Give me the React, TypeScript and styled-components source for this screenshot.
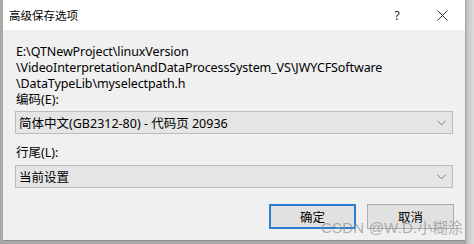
import styled, { createGlobalStyle } from "styled-components";

const GlobalStyle = createGlobalStyle`
  html, body {
    margin: 0;
    padding: 0;
    width: 474px;
    height: 244px;
    overflow: hidden;
    background: #b4b4b4;
  }
  * {
    box-sizing: border-box;
  }
`;

const font = `"Noto Sans", "Noto Sans CJK SC", sans-serif`;

const Screen = styled.div`
  width: 474px;
  height: 244px;
  display: flex;
  background: linear-gradient(to right, #a9a9a9 0, #a9a9a9 466px, #c4c4c4 467px, #dcdcdc 474px);
  padding-left: 3px;
  font-family: ${font};
  color: #000;
`;

const Dialog = styled.div`
  position: relative;
  width: 462px;
  height: 241px;
  display: flex;
  flex-direction: column;
  background: #f0f0f0;
  border-bottom: 1px solid #8a8a8a;
`;

const TitleBar = styled.div`
  height: 30px;
  background: #ffffff;
  display: flex;
  align-items: center;
  padding-left: 6px;
  font-size: 11.5px;
`;

const TitleText = styled.span`
  flex: 1;
`;

const TitleButton = styled.span<{ $w: number }>`
  width: ${(p) => p.$w}px;
  display: flex;
  align-items: center;
  justify-content: center;
  font-size: 12px;
  color: #222;
`;

const Body = styled.div`
  flex: 1;
  padding: 14px 12px 0 12px;
  display: flex;
  flex-direction: column;
  font-size: 12.5px;
`;

const PathLine = styled.div`
  height: 16px;
  line-height: 16px;
  padding-left: 1px;
  white-space: nowrap;
  letter-spacing: -0.1px;
`;

const Label = styled.div<{ $top: number }>`
  height: 16px;
  line-height: 16px;
  margin-top: ${(p) => p.$top}px;
  padding-left: 1px;
`;

const Select = styled.div<{ $top: number }>`
  margin-top: ${(p) => p.$top}px;
  width: 438px;
  height: 23px;
  border: 1px solid #bcbcbc;
  background: #e5e5e5;
  display: flex;
  align-items: center;
  padding-left: 3px;
  padding-right: 6px;
`;

const SelectText = styled.span`
  flex: 1;
`;

const ButtonRow = styled.div`
  margin-top: 16px;
  display: flex;
  justify-content: flex-end;
  gap: 11px;
  width: 439px;
`;

const Button = styled.div<{ $primary?: boolean }>`
  width: 87px;
  height: 25px;
  display: flex;
  align-items: center;
  justify-content: center;
  background: #e1e1e1;
  border: ${(p) => (p.$primary ? "2px solid #2a7ed0" : "1px solid #adadad")};
  font-size: 12.5px;
`;

const Watermark = styled.div`
  position: absolute;
  right: 2px;
  bottom: 3px;
  font-family: "Liberation Sans", "Noto Sans CJK SC", sans-serif;
  font-size: 15px;
  color: rgba(150, 150, 150, 0.75);
  letter-spacing: 0.2px;
  pointer-events: none;
`;

const Chevron = () => (
  <svg width="9" height="6" viewBox="0 0 9 6">
    <path d="M0.5 0.8 L4.5 4.8 L8.5 0.8" fill="none" stroke="#7a7a7a" strokeWidth="1" />
  </svg>
);

const CloseIcon = () => (
  <svg width="11" height="11" viewBox="0 0 11 11">
    <path d="M0.5 0.5 L10.5 10.5 M10.5 0.5 L0.5 10.5" stroke="#333" strokeWidth="1" />
  </svg>
);

export default function App() {
  return (
    <Screen>
      <GlobalStyle />
      <Dialog>
        <TitleBar>
          <TitleText>高级保存选项</TitleText>
          <TitleButton $w={44}>?</TitleButton>
          <TitleButton $w={46}>
            <CloseIcon />
          </TitleButton>
        </TitleBar>
        <Body>
          <PathLine>E:\QTNewProject\linuxVersion</PathLine>
          <PathLine>\VideoInterpretationAndDataProcessSystem_VS\JWYCFSoftware</PathLine>
          <PathLine>\DataTypeLib\myselectpath.h</PathLine>
          <Label $top={0}>编码(E):</Label>
          <Select $top={3}>
            <SelectText>简体中文(GB2312-80) - 代码页 20936</SelectText>
            <Chevron />
          </Select>
          <Label $top={11}>行尾(L):</Label>
          <Select $top={4}>
            <SelectText>当前设置</SelectText>
            <Chevron />
          </Select>
          <ButtonRow>
            <Button $primary>确定</Button>
            <Button>取消</Button>
          </ButtonRow>
        </Body>
        <Watermark>CSDN @W.D.小糊涂</Watermark>
      </Dialog>
    </Screen>
  );
}
